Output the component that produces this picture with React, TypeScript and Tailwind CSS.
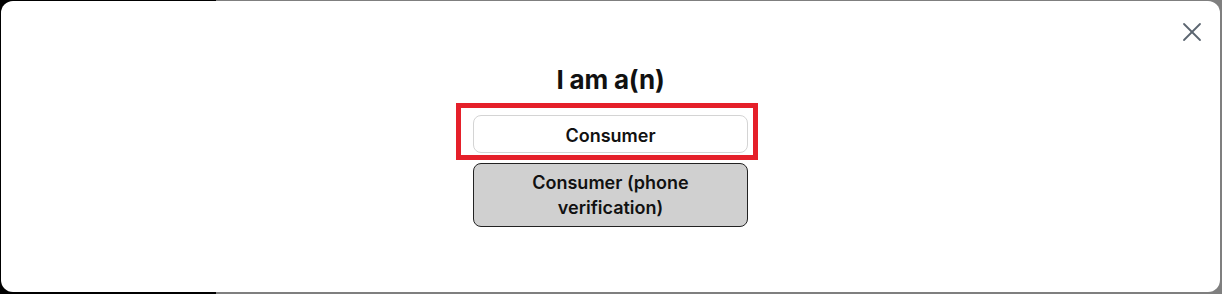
import React from "react";

function CloseIcon() {
  return (
    <svg width="20" height="20" viewBox="0 0 20 20" fill="none" stroke="#5b6570" strokeWidth="1.8" strokeLinecap="round">
      <path d="M2 2 18 18" />
      <path d="M18 2 2 18" />
    </svg>
  );
}

export default function App() {
  return (
    <div className="relative h-[294px] w-[1222px] overflow-hidden font-['Inter',sans-serif]">
      {/* backdrop */}
      <div className="flex h-full w-full">
        <div className="h-full w-[216px] bg-black" />
        <div className="h-full flex-1 bg-[#7f7f7f]" />
      </div>

      {/* modal */}
      <div className="absolute left-[1px] top-[1px] flex h-[291px] w-[1219px] flex-col items-center rounded-[12px] bg-white pt-[62px]">
        <button className="absolute right-[18px] top-[21px]" aria-label="Close">
          <CloseIcon />
        </button>

        <h2 className="text-[26px] font-bold leading-[34px] tracking-[-0.2px] text-[#111]">I am a(n)</h2>

        <div className="relative mt-[18px] flex flex-col items-center gap-[10px]">
          <button className="h-[38px] w-[275px] rounded-[8px] border border-[#d4d4d4] bg-white pt-[2px] text-[18px] font-semibold text-[#111]">
            Consumer
          </button>
          <button className="h-[64px] w-[275px] rounded-[8px] border border-[#222] bg-[#d0d0d0] px-8 text-[18px] font-semibold leading-[25px] text-[#111]">
            Consumer (phone verification)
          </button>

          {/* annotation highlight */}
          <div className="pointer-events-none absolute left-[-17px] top-[-12px] h-[57px] w-[302px] border-[5px] border-[#e5202a]" />
        </div>
      </div>
    </div>
  );
}
